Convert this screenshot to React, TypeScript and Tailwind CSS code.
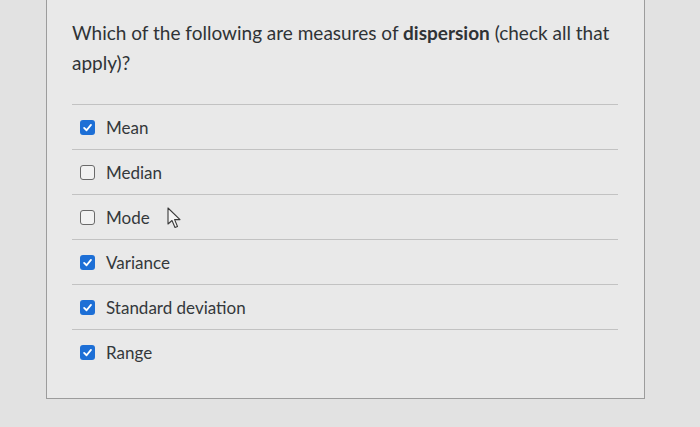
import React from "react";

const options = [
  { label: "Mean", checked: true },
  { label: "Median", checked: false },
  { label: "Mode", checked: false },
  { label: "Variance", checked: true },
  { label: "Standard deviation", checked: true },
  { label: "Range", checked: true },
];

function Checkbox({ checked }: { checked: boolean }) {
  if (checked) {
    return (
      <span className="flex h-[15px] w-[15px] shrink-0 items-center justify-center rounded-[3px] bg-[#1d6fd6]">
        <svg width="11" height="11" viewBox="0 0 12 12">
          <path d="M2.3 6.4 L5 9 L9.8 3.2" fill="none" stroke="#ffffff" strokeWidth="2" strokeLinecap="round" strokeLinejoin="round" />
        </svg>
      </span>
    );
  }
  return <span className="h-[15px] w-[15px] shrink-0 rounded-[3px] border-[1.5px] border-[#6a6a6a] bg-[#f2f2f2]" />;
}

export default function App() {
  return (
    <div
      className="relative h-[427px] w-[700px] overflow-hidden bg-[#e2e2e2] pl-[46px]"
      style={{ fontFamily: "Lato, 'Open Sans', sans-serif" }}
    >
      {/* Question card */}
      <div className="h-[399px] w-[599px] border-x border-b border-[#9c9c9c] bg-[#e9e9e9] px-[25px] pt-[18px]">
        <p className="text-[19px] leading-[30px] text-[#2f3336]">
          Which of the following are measures of <span className="font-bold">dispersion</span> (check all that apply)?
        </p>

        <div className="mt-[26px] w-[546px]">
          {options.map((o) => (
            <div key={o.label} className="flex h-[45px] items-center gap-[11px] border-t border-[#c2c2c2] pl-[8px]">
              <Checkbox checked={o.checked} />
              <span className="text-[17px] leading-none text-[#34383b]">{o.label}</span>
            </div>
          ))}
        </div>
      </div>

      {/* mouse pointer */}
      <svg className="absolute left-[167px] top-[207px]" width="16" height="23" viewBox="0 0 16 23">
        <path
          d="M1 1 L1 17 L5 13.5 L8 20.5 L10.5 19.5 L7.6 12.6 L13 12.6 Z"
          fill="#f4f4f4"
          stroke="#3a3a3a"
          strokeWidth="1.1"
          strokeLinejoin="round"
        />
      </svg>
    </div>
  );
}
